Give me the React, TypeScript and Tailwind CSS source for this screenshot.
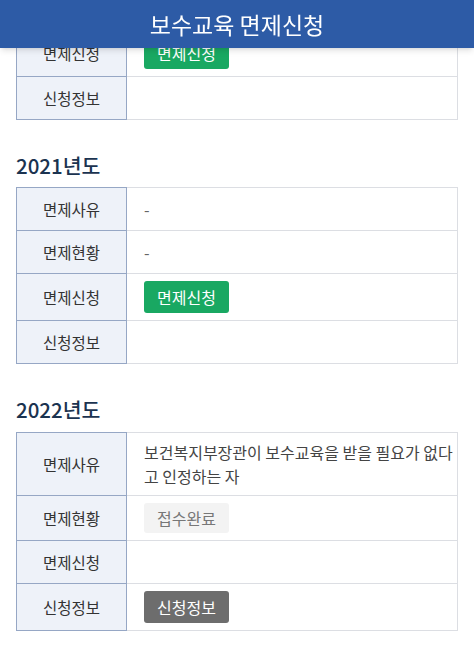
import * as React from 'react';

type Row = { label: string; value: React.ReactNode; multi?: boolean };

const font = { fontFamily: '"Noto Sans CJK KR", "Noto Sans", sans-serif' };

function GreenButton({ children }: { children: React.ReactNode }) {
  return (
    <button className="h-8 w-[85px] rounded-[3px] bg-[#19a862] text-[16px] text-white">
      {children}
    </button>
  );
}

function Dash() {
  return <span className="text-[#666]">-</span>;
}

function InfoTable({ rows }: { rows: Row[] }) {
  return (
    <table className="w-full border-collapse">
      <tbody>
        {rows.map((row, i) => (
          <tr key={i}>
            <td className="w-[110px] border border-[#96a7c5] bg-[#eef2f9] text-center text-[15.5px] leading-6 text-[#333]">
              {row.label}
            </td>
            <td
              className={
                'border border-[#dcdee3] bg-white pl-[17px] pr-[2px] text-[16px] leading-6 text-[#444] ' +
                (row.multi ? 'py-[7px]' : 'h-[43px] py-[7px]')
              }
            >
              {row.value}
            </td>
          </tr>
        ))}
      </tbody>
    </table>
  );
}

export default function App() {
  return (
    <div className="min-h-screen bg-white" style={font}>
      <header className="fixed inset-x-0 top-0 z-10 flex h-12 items-center justify-center bg-[#2d5ba6] shadow-md">
        <h1 className="text-[23px] text-white">보수교육 면제신청</h1>
      </header>

      <main className="px-4 pt-[29px] pb-8">
        <InfoTable
          rows={[
            { label: '면제신청', value: <GreenButton>면제신청</GreenButton> },
            { label: '신청정보', value: null },
          ]}
        />

        <h2 className="mt-[31px] mb-[8px] text-[20.5px] leading-7 font-medium text-[#1b3350]">2021년도</h2>
        <InfoTable
          rows={[
            { label: '면제사유', value: <Dash /> },
            { label: '면제현황', value: <Dash /> },
            { label: '면제신청', value: <GreenButton>면제신청</GreenButton> },
            { label: '신청정보', value: null },
          ]}
        />

        <h2 className="mt-[31px] mb-[9px] text-[20.5px] leading-7 font-medium text-[#1b3350]">2022년도</h2>
        <InfoTable
          rows={[
            {
              label: '면제사유',
              value: '보건복지부장관이 보수교육을 받을 필요가 없다고 인정하는 자',
              multi: true,
            },
            {
              label: '면제현황',
              value: (
                <span className="inline-flex h-[30px] w-[85px] items-center justify-center rounded-[3px] bg-[#f3f3f3] text-[16px] text-[#777]">
                  접수완료
                </span>
              ),
            },
            { label: '면제신청', value: null },
            {
              label: '신청정보',
              value: (
                <button className="h-8 w-[85px] rounded-[3px] bg-[#6d6d6d] text-[16px] text-white">
                  신청정보
                </button>
              ),
            },
          ]}
        />
      </main>
    </div>
  );
}
